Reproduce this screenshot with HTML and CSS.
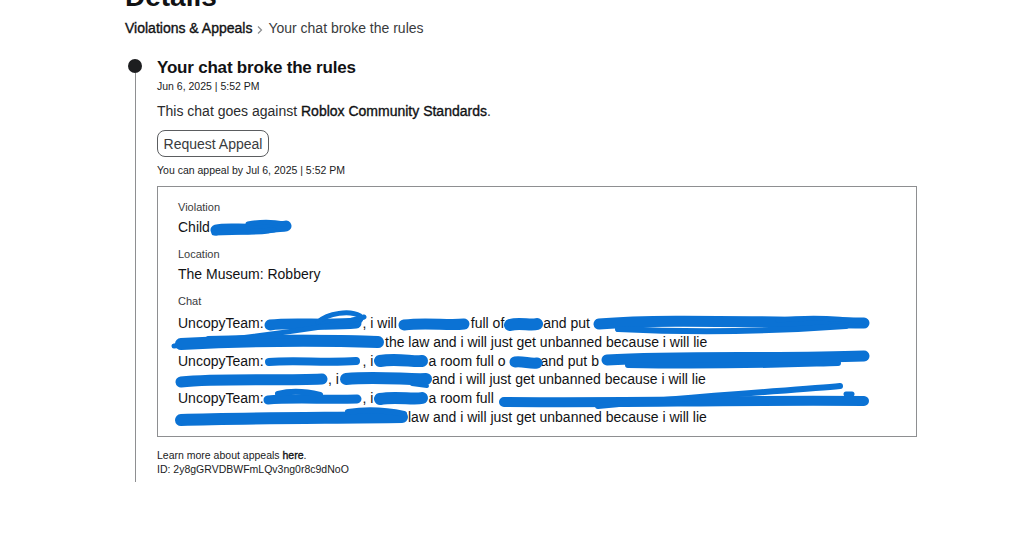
FILE: index.html
```html
<!DOCTYPE html>
<html>
<head>
<meta charset="utf-8">
<link rel="stylesheet" href="styles.css">
</head>
<body>
<div class="page">
  <h1 class="heading">Details</h1>
  <div class="crumbs">
    <span class="crumb-link">Violations &amp; Appeals</span>
    <svg class="chev" width="8" height="10" viewBox="0 0 8 10"><path d="M2 1.5 L5.5 5 L2 8.5" fill="none" stroke="#8a8c8e" stroke-width="1.2"/></svg>
    <span class="crumb-current">Your chat broke the rules</span>
  </div>

  <div class="entry">
    <div class="rail">
      <div class="dot"></div>
      <div class="line"></div>
    </div>
    <div class="content">
      <div class="title">Your chat broke the rules</div>
      <div class="small date">Jun 6, 2025 | 5:52 PM</div>
      <div class="desc">This chat goes against <span class="strong">Roblox Community Standards</span>.</div>
      <button class="appeal">Request Appeal</button>
      <div class="small deadline">You can appeal by Jul 6, 2025 | 5:52 PM</div>

      <div class="box">
        <div class="field">
          <div class="label">Violation</div>
          <div class="value">Child<span class="gap" style="width:82px"><svg class="inline-scrib" width="90" height="20" viewBox="0 0 90 20"><path d="M8 12 C20 9, 40 13, 60 10 C68 8, 74 9, 78 8" /><path d="M6 15 C20 15, 40 14, 66 12" class="thin"/><path d="M40 6 C55 3, 66 4, 76 6" class="thin"/></svg></span></div>
        </div>
        <div class="field">
          <div class="label">Location</div>
          <div class="value">The Museum: Robbery</div>
        </div>
        <div class="field last">
          <div class="label">Chat</div>
          <div class="chat">
            <div class="cl">UncopyTeam:<span class="gap" style="width:99px"></span>, i will<span class="gap" style="width:74px"></span>full of<span class="gap" style="width:39px"></span>and put<span class="gap" style="width:280px"></span></div>
            <div class="cl"><span class="gap lead" style="width:210px"></span>the law and i will just get unbanned because i will lie</div>
            <div class="cl">UncopyTeam:<span class="gap" style="width:99px"></span>, i<span class="gap" style="width:55px"></span>a room full o<span class="gap" style="width:35px"></span>and put b<span class="gap" style="width:269px"></span></div>
            <div class="cl"><span class="gap lead" style="width:153px"></span>, i<span class="gap" style="width:93px"></span>and i will just get unbanned because i will lie</div>
            <div class="cl">UncopyTeam:<span class="gap" style="width:99px"></span>, i<span class="gap" style="width:55px"></span>a room full<span class="gap" style="width:374px"></span></div>
            <div class="cl"><span class="gap lead" style="width:233px"></span>law and i will just get unbanned because i will lie</div>
            <svg class="scribbles" width="720" height="120" viewBox="0 0 720 120">
              <!-- line 1 -->
              <path d="M92 11 C115 8, 150 12, 178 9" class="w11"/>
              <path d="M140 8 C150 -1, 172 -4, 182 2 C185 6, 180 9, 174 9" class="w5"/>
              <path d="M-4 32 C50 26, 110 18, 150 12 C165 9, 176 6, 186 3" class="w5"/>
              <path d="M226 11 C250 8, 270 12, 286 10" class="w11"/>
              <path d="M332 11 C342 8, 352 12, 359 10" class="w12"/>
              <path d="M421 10 C480 5, 560 8, 686 9" class="w11"/>
              <path d="M440 15 C520 19, 600 17, 668 12" class="w6"/>
              <path d="M600 6 C630 3, 660 4, 688 8" class="w5"/>
              <!-- line 2 -->
              <path d="M3 30 C60 27, 140 26, 200 28" class="w12"/>
              <path d="M30 24 C80 22, 150 23, 196 24" class="w4"/>
              <!-- line 3 -->
              <path d="M91 48 C115 46, 150 49, 178 47" class="w8"/>
              <path d="M202 47 C218 44, 235 48, 244 47" class="w12"/>
              <path d="M337 48 C345 47, 352 50, 359 49" class="w11"/>
              <path d="M429 46 C500 42, 600 45, 686 42" class="w11"/>
              <path d="M450 51 C550 53, 620 50, 660 49" class="w6"/>
              <!-- line 4 -->
              <path d="M3 68 C40 64, 100 67, 144 65" class="w11"/>
              <path d="M168 65 C200 62, 230 66, 248 65" class="w12"/>
              <path d="M234 70 L249 72" class="w4"/>
              <!-- line 5 -->
              <path d="M90 86 C112 84, 150 86, 179 85" class="w9"/>
              <path d="M100 80 C115 76, 130 78, 142 81" class="w6"/>
              <path d="M202 85 C218 82, 235 86, 244 84" class="w12"/>
              <path d="M326 88 C450 89, 550 86, 686 87" class="w10"/>
              <path d="M420 92 C520 82, 620 76, 662 72" class="w6"/>
              <path d="M668 80 L674 80" class="w5"/>
              <path d="M324 86 L400 86" class="w3"/>
              <!-- line 6 -->
              <path d="M3 106 C60 104, 150 104, 224 103" class="w12"/>
              <path d="M170 98 C190 95, 212 97, 226 100" class="w6"/>
            </svg>
          </div>
        </div>
      </div>

      <div class="small learn">Learn more about appeals <span class="strong">here</span>.</div>
      <div class="small ident">ID: 2y8gGRVDBWFmLQv3ng0r8c9dNoO</div>
    </div>
  </div>
</div>
</body>
</html>
```

FILE: styles.css
```css
* { box-sizing: border-box; }
body {
  margin: 0;
  background: #ffffff;
  font-family: "Liberation Sans", Arial, sans-serif;
  color: #1a1b1d;
  overflow: hidden;
}
.page {
  margin-left: 125px;
  width: 792px;
}
.heading {
  margin: -20px 0 0 0;
  font-size: 28px;
  line-height: 34px;
  font-weight: 700;
  color: #111214;
}
.crumbs {
  margin-top: 5px;
  display: flex;
  align-items: center;
  gap: 4px;
  font-size: 14px;
  line-height: 18px;
}
.crumb-link {
  color: #111214;
  -webkit-text-stroke: 0.35px #111214;
}
.crumb-current { color: #393b3d; }
.chev { margin-top: 3px; }

.entry {
  margin-top: 21px;
  display: flex;
}
.rail {
  width: 32px;
  display: flex;
  flex-direction: column;
  align-items: flex-start;
}
.dot {
  width: 14px;
  height: 14px;
  border-radius: 50%;
  background: #1d1e20;
  margin-left: 3px;
  margin-top: 1px;
}
.line {
  width: 1px;
  flex: 1;
  background: #8e8f91;
  margin-left: 10px;
}
.content {
  width: 760px;
  padding-bottom: 6px;
}
.title {
  font-size: 17px;
  line-height: 20px;
  font-weight: 700;
  color: #111214;
  letter-spacing: -0.2px;
}
.small {
  font-size: 10.5px;
  line-height: 14px;
  color: #1a1b1d;
}
.date { margin-top: 1px; }
.desc {
  margin-top: 9px;
  font-size: 14px;
  line-height: 18px;
  color: #2a2b2d;
}
.strong {
  color: #111214;
  -webkit-text-stroke: 0.35px #111214;
}
.appeal {
  display: block;
  margin-top: 10px;
  width: 112px;
  height: 27px;
  padding: 0;
  border: 1px solid #5b5d60;
  border-radius: 8px;
  background: #fff;
  font-family: "Liberation Sans", Arial, sans-serif;
  font-size: 14px;
  color: #393b3d;
}
.deadline { margin-top: 6px; }

.box {
  margin-top: 9px;
  border: 1px solid #8e8f91;
  padding: 13px 20px 9px 20px;
}
.field { margin-bottom: 11px; }
.field.last { margin-bottom: 0; }
.label {
  font-size: 11px;
  line-height: 14px;
  color: #393b3d;
}
.value {
  margin-top: 4px;
  font-size: 14px;
  line-height: 18px;
  color: #111214;
}
.chat {
  margin-top: 6px;
  position: relative;
}
.cl {
  font-size: 14px;
  line-height: 18.8px;
  color: #111214;
  white-space: nowrap;
}
.gap {
  display: inline-block;
  height: 12px;
  vertical-align: -2px;
  position: relative;
}
.gap.lead { margin-left: -3px; }
.inline-scrib {
  display: block;
  margin-top: -4px;
  margin-left: -2px;
  overflow: visible;
}
.inline-scrib path,
.scribbles path {
  fill: none;
  stroke: #0b72d4;
  stroke-linecap: round;
  stroke-linejoin: round;
  stroke-width: 11px;
}
.inline-scrib path.thin { stroke-width: 5px; }
.scribbles {
  position: absolute;
  left: 0;
  top: 0;
  overflow: visible;
  pointer-events: none;
}
.scribbles path.w3 { stroke-width: 3px; }
.scribbles path.w4 { stroke-width: 4px; }
.scribbles path.w5 { stroke-width: 5px; }
.scribbles path.w6 { stroke-width: 6px; }
.scribbles path.w8 { stroke-width: 8px; }
.scribbles path.w9 { stroke-width: 9px; }
.scribbles path.w10 { stroke-width: 10px; }
.scribbles path.w11 { stroke-width: 11px; }
.scribbles path.w12 { stroke-width: 12px; }
.learn { margin-top: 11px; }
```
